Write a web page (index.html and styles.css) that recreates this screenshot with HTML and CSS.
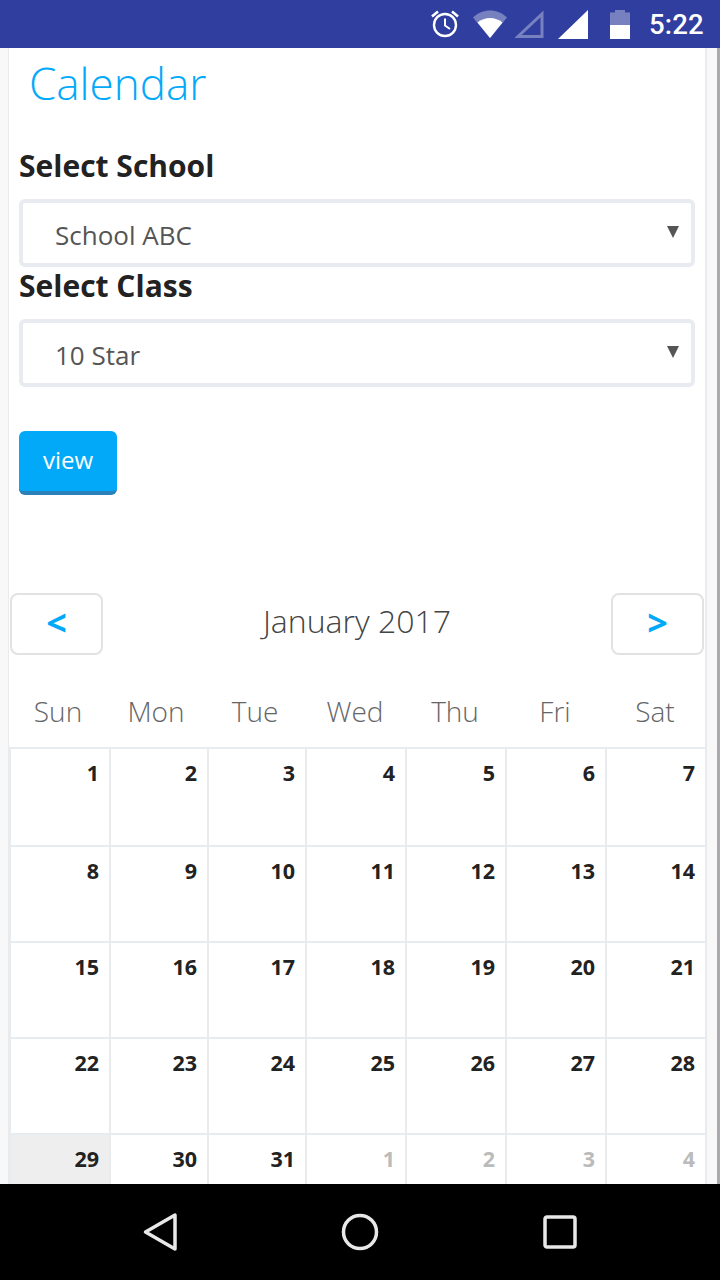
FILE: index.html
```html
<!DOCTYPE html>
<html lang="en">
<head>
<meta charset="utf-8">
<title>Calendar</title>
<link rel="stylesheet" href="styles.css">
</head>
<body>
<div class="screen">
  <header class="statusbar">
    <svg class="ic-alarm" width="30" height="30" viewBox="0 0 30 30"><circle cx="15" cy="16" r="11" fill="none" stroke="#fff" stroke-width="2.4"/><path d="M15 9.500V16.500L20 20" fill="none" stroke="#fff" stroke-width="2"/><path d="M2 7.500L8 2.500M28 7.500L22 2.500" stroke="#fff" stroke-width="2.600"/></svg>
    <svg class="ic-wifi" width="34" height="28" viewBox="0 0 34 28"><path d="M0 7.500C9.500-2 24.500-2 34 7.500L17 28Z" fill="#fff" opacity=".35"/><path d="M4.500 12.500C11.500 6.500 22.500 6.500 29.500 12.500L17 28Z" fill="#fff"/></svg>
    <svg class="ic-sig1" width="29" height="28" viewBox="0 0 29 28"><path d="M27 4V26.500H3Z" fill="none" stroke="#fff" stroke-opacity=".35" stroke-width="3"/></svg>
    <svg class="ic-sig2" width="30" height="29" viewBox="0 0 30 29"><path d="M30 0V29H0Z" fill="#fff"/></svg>
    <svg class="ic-batt" width="20" height="29" viewBox="0 0 20 29"><path d="M5 0H15V2.500H20V15H0V2.500H5Z" fill="#fff" opacity=".35"/><rect y="15" width="20" height="14" fill="#fff"/></svg>
    <span class="clock">5:22</span>
  </header>

  <main class="viewport">
    <div class="frame">
      <h1 class="title">Calendar</h1>
      <form class="form">
        <label class="field-label">Select School</label>
        <div class="select"><span>School ABC</span><i class="caret"></i></div>
        <label class="field-label">Select Class</label>
        <div class="select"><span>10 Star</span><i class="caret"></i></div>
        <button class="view-btn" type="button">view</button>
      </form>

      <section class="calendar">
        <div class="cal-head">
          <button class="nav-btn" type="button">&lt;</button>
          <h2 class="month">January 2017</h2>
          <button class="nav-btn" type="button">&gt;</button>
        </div>
        <div class="grid weekdays">
          <div>Sun</div><div>Mon</div><div>Tue</div><div>Wed</div><div>Thu</div><div>Fri</div><div>Sat</div>
        </div>
        <div class="grid days first">
          <div>1</div><div>2</div><div>3</div><div>4</div><div>5</div><div>6</div><div>7</div>
        </div>
        <div class="grid days">
          <div>8</div><div>9</div><div>10</div><div>11</div><div>12</div><div>13</div><div>14</div>
        </div>
        <div class="grid days">
          <div>15</div><div>16</div><div>17</div><div>18</div><div>19</div><div>20</div><div>21</div>
        </div>
        <div class="grid days">
          <div>22</div><div>23</div><div>24</div><div>25</div><div>26</div><div>27</div><div>28</div>
        </div>
        <div class="grid days">
          <div class="today">29</div><div>30</div><div>31</div><div class="other">1</div><div class="other">2</div><div class="other">3</div><div class="other">4</div>
        </div>
      </section>
    </div>
  </main>

  <nav class="navbar">
    <svg width="36" height="40" viewBox="0 0 36 40"><path d="M2.500 20L32 3V37Z" fill="none" stroke="#e8e8e8" stroke-width="3.500" stroke-linejoin="round"/></svg>
    <svg width="38" height="38" viewBox="0 0 38 38"><circle cx="19" cy="19" r="16.500" fill="none" stroke="#e8e8e8" stroke-width="3.500"/></svg>
    <svg width="34" height="34" viewBox="0 0 34 34"><rect x="2" y="2" width="30" height="30" rx="2" fill="none" stroke="#e8e8e8" stroke-width="3.500"/></svg>
  </nav>
</div>
</body>
</html>
```
FILE: styles.css
```css
* { box-sizing: border-box; }
html, body { margin: 0; padding: 0; }
body {
  width: 720px;
  height: 1280px;
  overflow: hidden;
  font-family: "Open Sans", "Liberation Sans", sans-serif;
  background: #f8f8f8;
}
.screen { display: flex; flex-direction: column; height: 1280px; }

.statusbar {
  height: 48px;
  flex: none;
  background: #303e9f;
  display: flex;
  align-items: center;
  color: #fff;
  padding-left: 430px;
}
.statusbar svg { flex: none; display: block; }
.ic-wifi { margin-left: 13px; }
.ic-sig1 { margin-left: 8px; margin-top: -1px; }
.ic-sig2 { margin-left: 14px; }
.ic-batt { margin-left: 22px; }
.clock {
  font-family: Roboto, sans-serif;
  font-weight: 500;
  font-size: 27.500px;
  margin-left: 19px;
  letter-spacing: 0.2px;
}

.viewport {
  flex: 1;
  min-height: 0;
  overflow: hidden;
  padding: 0 3px 0 8px;
  background: linear-gradient(to left, #a9a9ae 3px, #f8f8f8 3px);
}
.frame {
  width: 699px;
  height: 100%;
  background: #fff;
  border-left: 1px solid #e9ecef;
  border-right: 2px solid #e9ecef;
}

.title {
  margin: 0;
  padding: 8px 0 0 20px;
  font-weight: 300;
  font-size: 44px;
  line-height: 54px;
  color: #03a9f9;
}
.form { padding: 0 10px; display: flex; flex-direction: column; align-items: flex-start; }
.field-label {
  display: block;
  font-weight: 700;
  font-size: 30px;
  line-height: 38px;
  color: #222;
}
.form > .field-label:first-child { margin-top: 37px; }
.select {
  width: 676px;
  height: 68px;
  margin-top: 14px;
  border: 4px solid #e8ebef;
  border-radius: 6px;
  display: flex;
  justify-content: space-between;
  color: #555;
  font-size: 26px;
  line-height: 64px;
  padding: 0 12px 0 32px;
}
.caret {
  width: 0;
  height: 0;
  margin-top: 23px;
  border-left: 6px solid transparent;
  border-right: 6px solid transparent;
  border-top: 12px solid #555;
}
.view-btn {
  width: 98px;
  height: 64px;
  margin-top: 44px;
  background: #03a9f9;
  border: 0;
  border-bottom: 4px solid #2a80b9;
  border-radius: 6px;
  color: #fff;
  font: 400 24px "Open Sans", sans-serif;
  padding: 0 0 4px;
}

.calendar { margin-top: 98px; }
.cal-head { display: flex; align-items: center; justify-content: space-between; padding: 0 1px; height: 62px; }
.nav-btn {
  width: 93px;
  height: 62px;
  background: #fff;
  border: 2px solid #e2e2e2;
  border-radius: 8px;
  color: #03a9f9;
  font: 700 36px/1 "Open Sans", sans-serif;
  padding: 0 0 2px;
}
.month {
  margin: 0 0 6px;
  font-weight: 300;
  font-size: 32px;
  line-height: 56px;
  color: #444;
}
.grid { display: grid; grid-template-columns: 100px 98px 98px 100px 100px 100px 100px; }
.weekdays {
  height: 94px;
  grid-template-columns: 98px 98px 100px 100px 100px 100px 100px;
  align-items: center;
  text-align: center;
  font-weight: 300;
  font-size: 28px;
  color: #666;
  border-bottom: 2px solid #e9ecef;
  padding-top: 19px;
  line-height: 40px;
}
.days {
  height: 96px;
  border-bottom: 2px solid #e9ecef;
}
.days.first { height: 98px; }
.days > div {
  border-left: 2px solid #e9ecef;
  text-align: right;
  padding: 9px 10px 0 0;
  font-weight: 700;
  font-size: 21.500px;
  line-height: 30px;
  color: #222;
}
.days > div.today { background: #eee; }
.days > div.other { color: #bbb; }

.navbar {
  height: 96px;
  flex: none;
  background: #000;
  display: flex;
  align-items: center;
  padding-left: 143px;
}
.navbar svg { flex: none; display: block; }
.navbar svg:nth-child(2) { margin-left: 162px; }
.navbar svg:nth-child(3) { margin-left: 164px; }
```
